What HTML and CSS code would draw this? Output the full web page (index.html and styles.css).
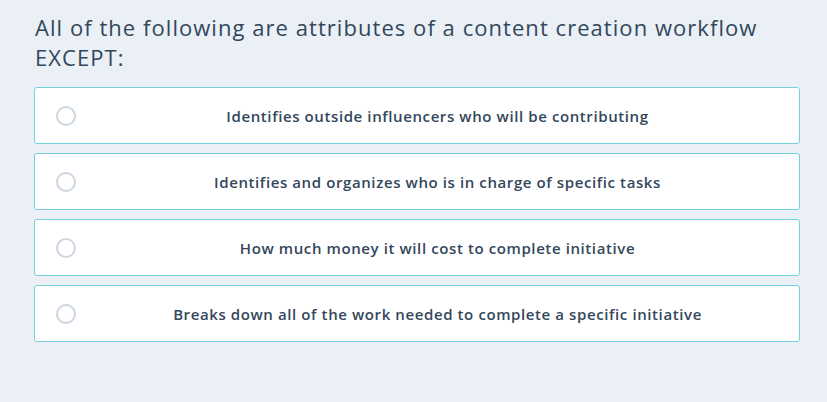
FILE: index.html
```html
<!DOCTYPE html>
<html>
<head>
<meta charset="utf-8">
<link rel="stylesheet" href="styles.css">
</head>
<body>
<div class="quiz">
  <h1 class="question">All of the following are attributes of a content creation workflow EXCEPT:</h1>
  <div class="options">
    <label class="option"><span class="radio"></span><span class="text">Identifies outside influencers who will be contributing</span></label>
    <label class="option"><span class="radio"></span><span class="text">Identifies and organizes who is in charge of specific tasks</span></label>
    <label class="option"><span class="radio"></span><span class="text">How much money it will cost to complete initiative</span></label>
    <label class="option"><span class="radio"></span><span class="text">Breaks down all of the work needed to complete a specific initiative</span></label>
  </div>
</div>
</body>
</html>
```
FILE: styles.css
```css
html, body {
  margin: 0;
  padding: 0;
  background: #eaf0f6;
  height: 100%;
}
.quiz {
  width: 766px;
  padding: 12px 0 0 34px;
  font-family: "Open Sans", "Noto Sans", sans-serif;
  color: #33475b;
}
.question {
  margin: 0 0 0 1px;
  font-size: 22px;
  font-weight: 400;
  line-height: 30px;
  letter-spacing: 1.05px;
}
.options {
  margin-top: 15px;
  display: flex;
  flex-direction: column;
  gap: 9px;
}
.option {
  display: flex;
  align-items: center;
  height: 55px;
  background: #ffffff;
  border: 1px solid #76cfdc;
  border-radius: 3px;
  padding-left: 21px;
}
.radio {
  width: 16px;
  height: 16px;
  border: 2px solid #cbd6e2;
  border-radius: 50%;
  flex: none;
}
.text {
  flex: 1;
  text-align: center;
  font-size: 15px;
  font-weight: 600;
  letter-spacing: 0.6px;
}
```
